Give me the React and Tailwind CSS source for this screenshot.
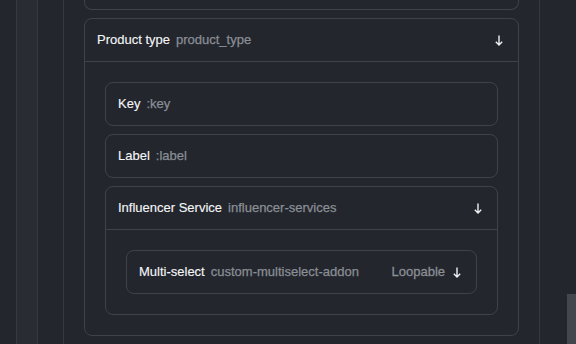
import React from 'react';

const Arrow = () => (
  <svg width="8" height="11" viewBox="0 0 8 11" fill="none" className="shrink-0">
    <path d="M4 0.5V10M0.8 6.8L4 10L7.2 6.8" stroke="#eef0f3" strokeWidth="1.4" />
  </svg>
);

const Title = ({ name, slug }) => (
  <div className="flex items-center gap-1.5">
    <span className="text-[#f5f6f8] [-webkit-text-stroke:0.12px_#f5f6f8]">{name}</span>
    <span className="text-[#8a8e95] [-webkit-text-stroke:0.25px_#8a8e95]">{slug}</span>
  </div>
);

const Row = ({ name, slug }) => (
  <div className="border border-[#3f4249] rounded-lg h-[44px] px-3 flex items-center">
    <Title name={name} slug={slug} />
  </div>
);

const App = () => {
  return (
    <div className="w-[576px] h-[344px] overflow-hidden bg-[#23262d] flex font-['Liberation_Sans',Arial,sans-serif] text-[13px]">
      <div className="w-4 shrink-0" />
      <div className="w-[22px] shrink-0 bg-[#292c33] border-x border-[#363940]" />
      <div className="w-[25px] shrink-0" />

      <div className="w-[477px] shrink-0 border-x border-[#363940] px-5">
        <div className="h-[10px] border border-t-0 border-[#3f4249] rounded-b-lg" />

        <div className="mt-2 border border-[#3f4249] rounded-lg">
          <div className="h-[43px] border-b border-[#3f4249] pl-3 pr-[15px] flex items-center justify-between">
            <Title name="Product type" slug="product_type" />
            <Arrow />
          </div>

          <div className="p-5 flex flex-col gap-2">
            <Row name="Key" slug=":key" />
            <Row name="Label" slug=":label" />

            <div className="border border-[#3f4249] rounded-lg">
              <div className="h-[43px] border-b border-[#3f4249] pl-3 pr-[15px] flex items-center justify-between">
                <Title name="Influencer Service" slug="influencer-services" />
                <Arrow />
              </div>
              <div className="p-5">
                <div className="border border-[#3f4249] rounded-lg h-[44px] pl-3 pr-[15px] flex items-center justify-between">
                  <Title name="Multi-select" slug="custom-multiselect-addon" />
                  <div className="flex items-center gap-2">
                    <span className="text-[#8a8e95] [-webkit-text-stroke:0.3px_#8a8e95]">Loopable</span>
                    <Arrow />
                  </div>
                </div>
              </div>
            </div>
          </div>
        </div>
      </div>

      <div className="flex-1 flex flex-col items-end">
        <div className="h-[294px] shrink-0" />
        <div className="w-[9px] flex-1 bg-[#43464c]" />
      </div>
    </div>
  );
};

export default App;
